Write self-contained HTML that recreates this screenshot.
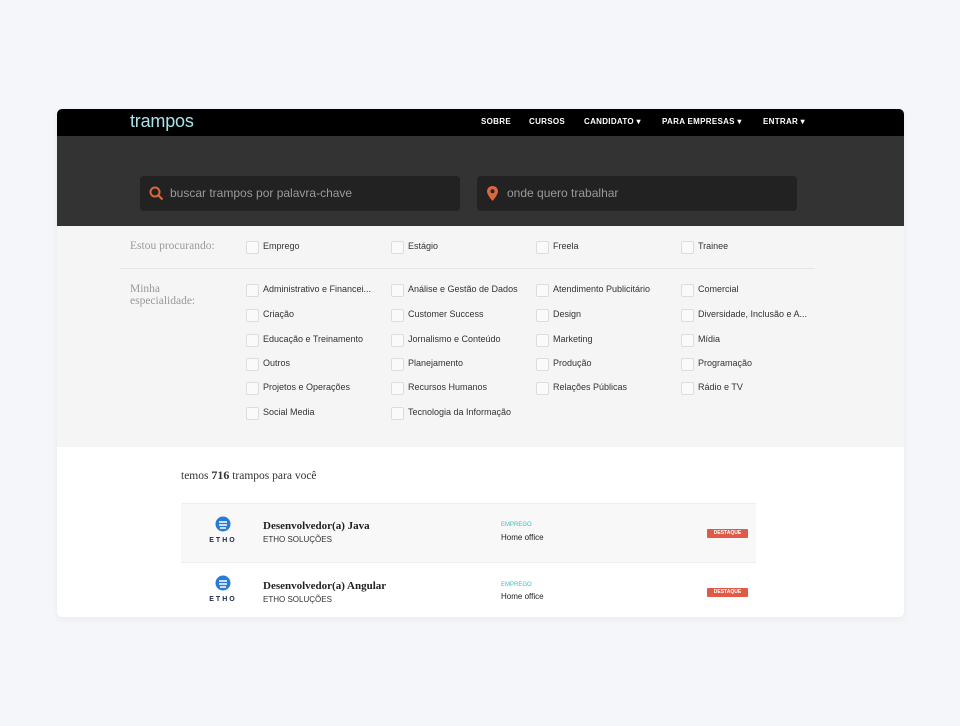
<!DOCTYPE html>
<html><head><meta charset="utf-8"><style>
*{margin:0;padding:0;box-sizing:border-box}
body{width:960px;height:726px;background:#f4f6f9;font-family:"Liberation Sans",sans-serif;position:relative;overflow:hidden}
.card{position:absolute;left:57px;top:109px;width:847px;height:508px;background:#fff;border-radius:5px;overflow:hidden;box-shadow:0 2px 8px rgba(0,0,0,.05)}
.hdr{position:absolute;left:0;top:0;width:100%;height:27px;background:#000}
.logo{position:absolute;left:73px;top:1px;color:#a8e4ea;font-size:18px;letter-spacing:-.2px;line-height:22px}
.nav{position:absolute;top:8px;color:#fff;font-size:8px;font-weight:bold;letter-spacing:.3px}
.dark{position:absolute;left:0;top:27px;width:100%;height:90px;background:#333}
.inp{position:absolute;top:40px;height:35px;background:#222;border-radius:4px;color:#9a9a9a;font-size:12px;line-height:35px}
.filt{position:absolute;left:0;top:117px;width:100%;height:221px;background:#f5f5f5}
.lab{position:absolute;font-family:"Liberation Serif",serif;color:#999;font-size:11.5px;line-height:12px}
.cb{position:absolute;width:13px;height:13px;border:1px solid #ddd;background:#fafafa;border-radius:2px}
.ct{position:absolute;font-size:9px;color:#333;white-space:nowrap}
.sep{position:absolute;left:63px;top:159px;width:695px;height:1px;background:#e6e6e6}
.cnt{position:absolute;left:124px;top:359px;font-family:"Liberation Serif",serif;font-size:11.5px;color:#333}
.row{position:absolute;left:124px;width:575px;height:59px;border-top:1px solid #eee}
.t{position:absolute;left:82px;font-family:"Liberation Serif",serif;font-size:11px;font-weight:bold;color:#222}
.c{position:absolute;left:82px;font-size:8px;color:#333}
.ty{position:absolute;left:320px;font-size:6px;color:#3bbfc4}
.lo{position:absolute;left:320px;font-size:8px;color:#222}
.bd{position:absolute;left:526px;width:41px;height:9px;background:#e05a47;color:#fff;font-size:5px;font-weight:bold;text-align:center;line-height:9px;border-radius:1px}
.el{position:absolute;left:24px;width:36px;text-align:center}
</style></head><body>
<div class="card">
<div class="hdr">
<div class="logo">trampos</div>
<div class="nav" style="left:424px">SOBRE</div>
<div class="nav" style="left:472px">CURSOS</div>
<div class="nav" style="left:527px">CANDIDATO ▾</div>
<div class="nav" style="left:605px">PARA EMPRESAS ▾</div>
<div class="nav" style="left:706px">ENTRAR ▾</div>
</div>
<div class="dark">
<div class="inp" style="left:83px;width:320px"><svg style="position:absolute;left:9px;top:10px" width="15" height="15" viewBox="0 0 15 15"><circle cx="6" cy="6" r="4.5" fill="none" stroke="#d9683f" stroke-width="2"/><path d="M9.5 9.5L13.5 13.5" stroke="#d9683f" stroke-width="2.2"/></svg><span style="position:absolute;left:30px">buscar trampos por palavra-chave</span></div>
<div class="inp" style="left:420px;width:320px"><svg style="position:absolute;left:10px;top:10px" width="11" height="15" viewBox="0 0 11 15"><path d="M5.5 0C2.5 0 0 2.3 0 5.3 0 9 5.5 15 5.5 15S11 9 11 5.3C11 2.3 8.5 0 5.5 0z" fill="#d9683f"/><circle cx="5.5" cy="5.3" r="2" fill="#222"/></svg><span style="position:absolute;left:30px">onde quero trabalhar</span></div>
</div>
<div class="filt"></div>
<div class="lab" style="left:73px;top:131px">Estou procurando:</div>
<div class="sep"></div>
<div class="lab" style="left:73px;top:174px">Minha<br>especialidade:</div>
<div class="cnt">temos <b style="font-size:12px">716</b> tramp​os para você</div>
<div class="row" style="top:394px;background:#f8f8f8">
<div class="el" style="top:12px"><svg width="16" height="16" viewBox="0 0 16 16"><circle cx="8" cy="8" r="7.5" fill="#2a7bd4"/><path d="M4 6h8M4 9h8M5 12h6" stroke="#fff" stroke-width="1.4"/></svg><div style="font-size:7px;font-weight:bold;color:#1b2a4a;letter-spacing:2px;line-height:7px">ETHO</div></div>
<div class="t" style="top:16px">Desenvolvedor(a) Java</div><div class="c" style="top:31px">ETHO SOLUÇÕES</div>
<div class="ty" style="top:18px">EMPREGO</div><div class="lo" style="top:29px">Home office</div>
<div class="bd" style="top:25px">DESTAQUE</div>
</div>
<div class="row" style="top:453px">
<div class="el" style="top:12px"><svg width="16" height="16" viewBox="0 0 16 16"><circle cx="8" cy="8" r="7.5" fill="#2a7bd4"/><path d="M4 6h8M4 9h8M5 12h6" stroke="#fff" stroke-width="1.4"/></svg><div style="font-size:7px;font-weight:bold;color:#1b2a4a;letter-spacing:2px;line-height:7px">ETHO</div></div>
<div class="t" style="top:17px">Desenvolvedor(a) Angular</div><div class="c" style="top:32px">ETHO SOLUÇÕES</div>
<div class="ty" style="top:19px">EMPREGO</div><div class="lo" style="top:29px">Home office</div>
<div class="bd" style="top:25px">DESTAQUE</div>
</div>
</div>
<script>
var cols=[189,334,479,624];
var rows=[[131,["Emprego","Estágio","Freela","Trainee"]],
[174,["Administrativo e Financei...","Análise e Gestão de Dados","Atendimento Publicitário","Comercial"]],
[199,["Criação","Customer Success","Design","Diversidade, Inclusão e A..."]],
[224,["Educação e Treinamento","Jornalismo e Conteúdo","Marketing","Mídia"]],
[248,["Outros","Planejamento","Produção","Programação"]],
[272,["Projetos e Operações","Recursos Humanos","Relações Públicas","Rádio e TV"]],
[297,["Social Media","Tecnologia da Informação"]]];
var h="";rows.forEach(function(r){r[1].forEach(function(t,i){h+='<div class="cb" style="left:'+cols[i]+'px;top:'+(r[0]+1)+'px"></div><div class="ct" style="left:'+(cols[i]+17)+'px;top:'+(r[0]+1)+'px">'+t+'</div>';});});
document.querySelector('.card').insertAdjacentHTML('beforeend',h);
</script>
</body></html>
